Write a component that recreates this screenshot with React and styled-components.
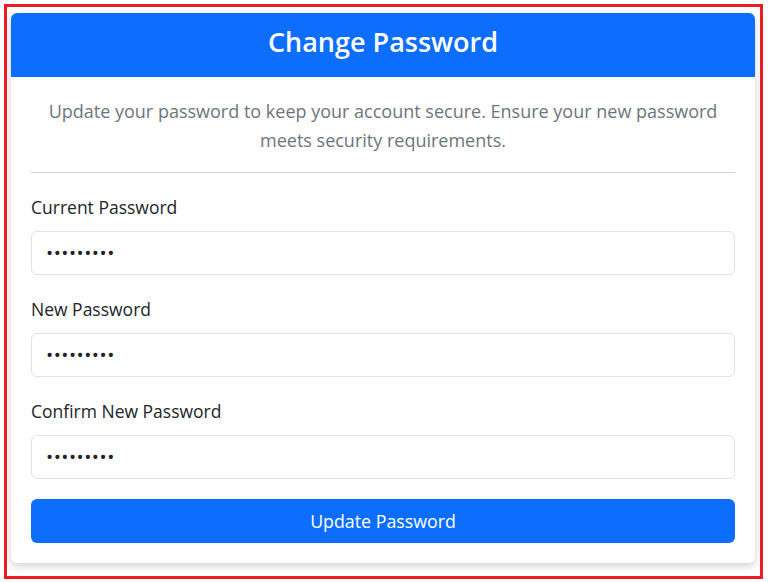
import React from "react"
import styled, { createGlobalStyle } from 'styled-components'

const GlobalStyle = createGlobalStyle`
    * {
        box-sizing: border-box;
    }
    body {
        margin: 0;
        background: #ffffff;
        font-family: "Open Sans", "Noto Sans", sans-serif;
        color: #212529;
    }
`

const Frame = styled.div`
    margin: 4px;
    width: 759px;
    border: 3px solid #ed1c24;
    padding: 6px 5px 13px 4px;
`

const Card = styled.div`
    background: #ffffff;
    border-radius: 6px;
    box-shadow: 0 3px 9px rgba(0, 0, 0, 0.18);
    overflow: hidden;
`

const Header = styled.div`
    height: 64px;
    padding-bottom: 7px;
    display: flex;
    align-items: center;
    justify-content: center;
    background: #0d6efd;
    color: #ffffff;
    font-size: 27px;
    font-weight: 600;
`

const Body = styled.div`
    padding: 20px;
`

const Intro = styled.p`
    margin: 0 0 17px;
    text-align: center;
    color: #6c757d;
    font-size: 18px;
    line-height: 29px;
    padding: 0 10px;
`

const Divider = styled.hr`
    margin: 0;
    border: none;
    border-top: 1px solid #cfd2d5;
`

const Form = styled.form`
    display: flex;
    flex-direction: column;
    gap: 20px;
    margin-top: 20px;
`

const Field = styled.div`
    display: flex;
    flex-direction: column;
    gap: 9px;
    label {
        font-size: 17.5px;
        line-height: 29px;
        color: #212529;
    }
`

const Input = styled.input`
    height: 44px;
    padding: 0 14px;
    border: 1px solid #dee2e6;
    border-radius: 6px;
    font-family: inherit;
    font-size: 19px;
    color: #212529;
    letter-spacing: 0.5px;
    :focus {
        outline: none;
    }
`

const SubmitButton = styled.button`
    height: 44px;
    border: none;
    border-radius: 6px;
    background-color: #0d6efd;
    color: #ffffff;
    font-family: inherit;
    font-size: 17.8px;
    cursor: pointer;
`

const fields = [
    { id: 'currentPassword', label: 'Current Password' },
    { id: 'newPassword', label: 'New Password' },
    { id: 'confirmPassword', label: 'Confirm New Password' },
]

const App = () => {
    return (
        <>
            <GlobalStyle />
            <Frame>
                <Card>
                    <Header>Change Password</Header>
                    <Body>
                        <Intro>
                            Update your password to keep your account secure. Ensure your new password meets security requirements.
                        </Intro>
                        <Divider />
                        <Form onSubmit={(e) => e.preventDefault()}>
                            {fields.map((f) => (
                                <Field key={f.id}>
                                    <label htmlFor={f.id}>{f.label}</label>
                                    <Input type="password" id={f.id} defaultValue="password1" readOnly />
                                </Field>
                            ))}
                            <SubmitButton type="submit">Update Password</SubmitButton>
                        </Form>
                    </Body>
                </Card>
            </Frame>
        </>
    )
}

export default App
